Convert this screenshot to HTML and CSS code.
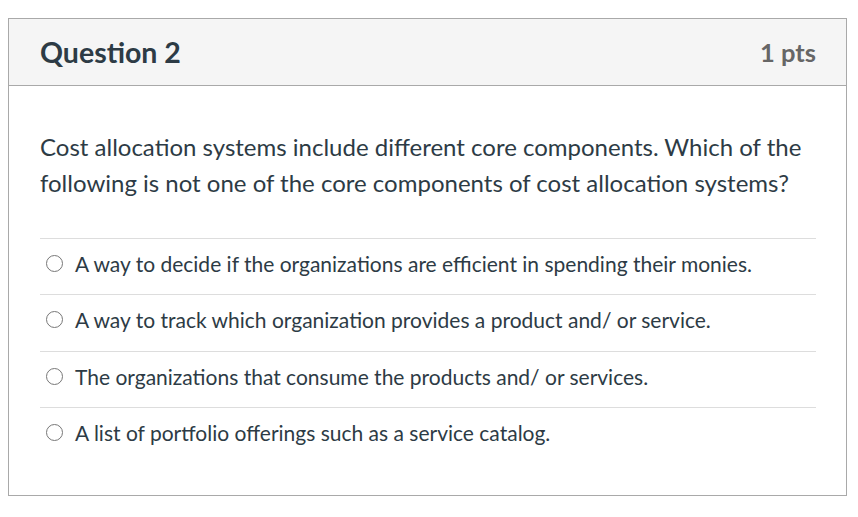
FILE: index.html
```html
<!DOCTYPE html>
<html>
<head>
<meta charset="utf-8">
<link rel="stylesheet" href="styles.css">
</head>
<body>
<div class="card">
  <div class="header">
    <h2 class="title">Question 2</h2>
    <span class="pts">1 pts</span>
  </div>
  <div class="content">
    <p class="question">Cost allocation systems include different core components. Which of the following is not one of the core components of cost allocation systems?</p>
    <div class="answers">
      <label class="answer"><span class="radio"></span><span class="text">A way to decide if the organizations are efficient in spending their monies.</span></label>
      <label class="answer"><span class="radio"></span><span class="text">A way to track which organization provides a product and/ or service.</span></label>
      <label class="answer"><span class="radio"></span><span class="text">The organizations that consume the products and/ or services.</span></label>
      <label class="answer"><span class="radio"></span><span class="text">A list of portfolio offerings such as a service catalog.</span></label>
    </div>
  </div>
</div>
</body>
</html>
```

FILE: styles.css
```css
html, body {
  margin: 0;
  padding: 0;
  background: #ffffff;
}
body {
  font-family: Lato, "Noto Sans", sans-serif;
  color: #2d3b45;
}
.card {
  margin: 18px 0 0 8px;
  width: 839px;
  height: 478px;
  box-sizing: border-box;
  border: 1px solid #a9a9a9;
}
.header {
  height: 67px;
  box-sizing: border-box;
  background: #f5f5f5;
  border-bottom: 1px solid #a9a9a9;
  display: flex;
  align-items: center;
  justify-content: space-between;
  padding: 0 30px 0 31px;
}
.title {
  margin: 0;
  font-size: 28.5px;
  font-weight: 700;
  color: #2d3b45;
}
.pts {
  font-size: 25.5px;
  font-weight: 700;
  color: #666666;
}
.content {
  padding: 43px 30px 0 31px;
}
.question {
  margin: 0 0 37px 0;
  font-size: 24px;
  line-height: 36px;
}
.answer {
  display: flex;
  align-items: center;
  height: 49.33px;
  padding-bottom: 6px;
  border-top: 1px solid #dddddd;
  font-size: 21px;
}
.radio {
  width: 15px;
  height: 15px;
  border: 1.2px solid #777777;
  border-radius: 50%;
  margin: 0 12px 0 6px;
  flex: none;
}
```
